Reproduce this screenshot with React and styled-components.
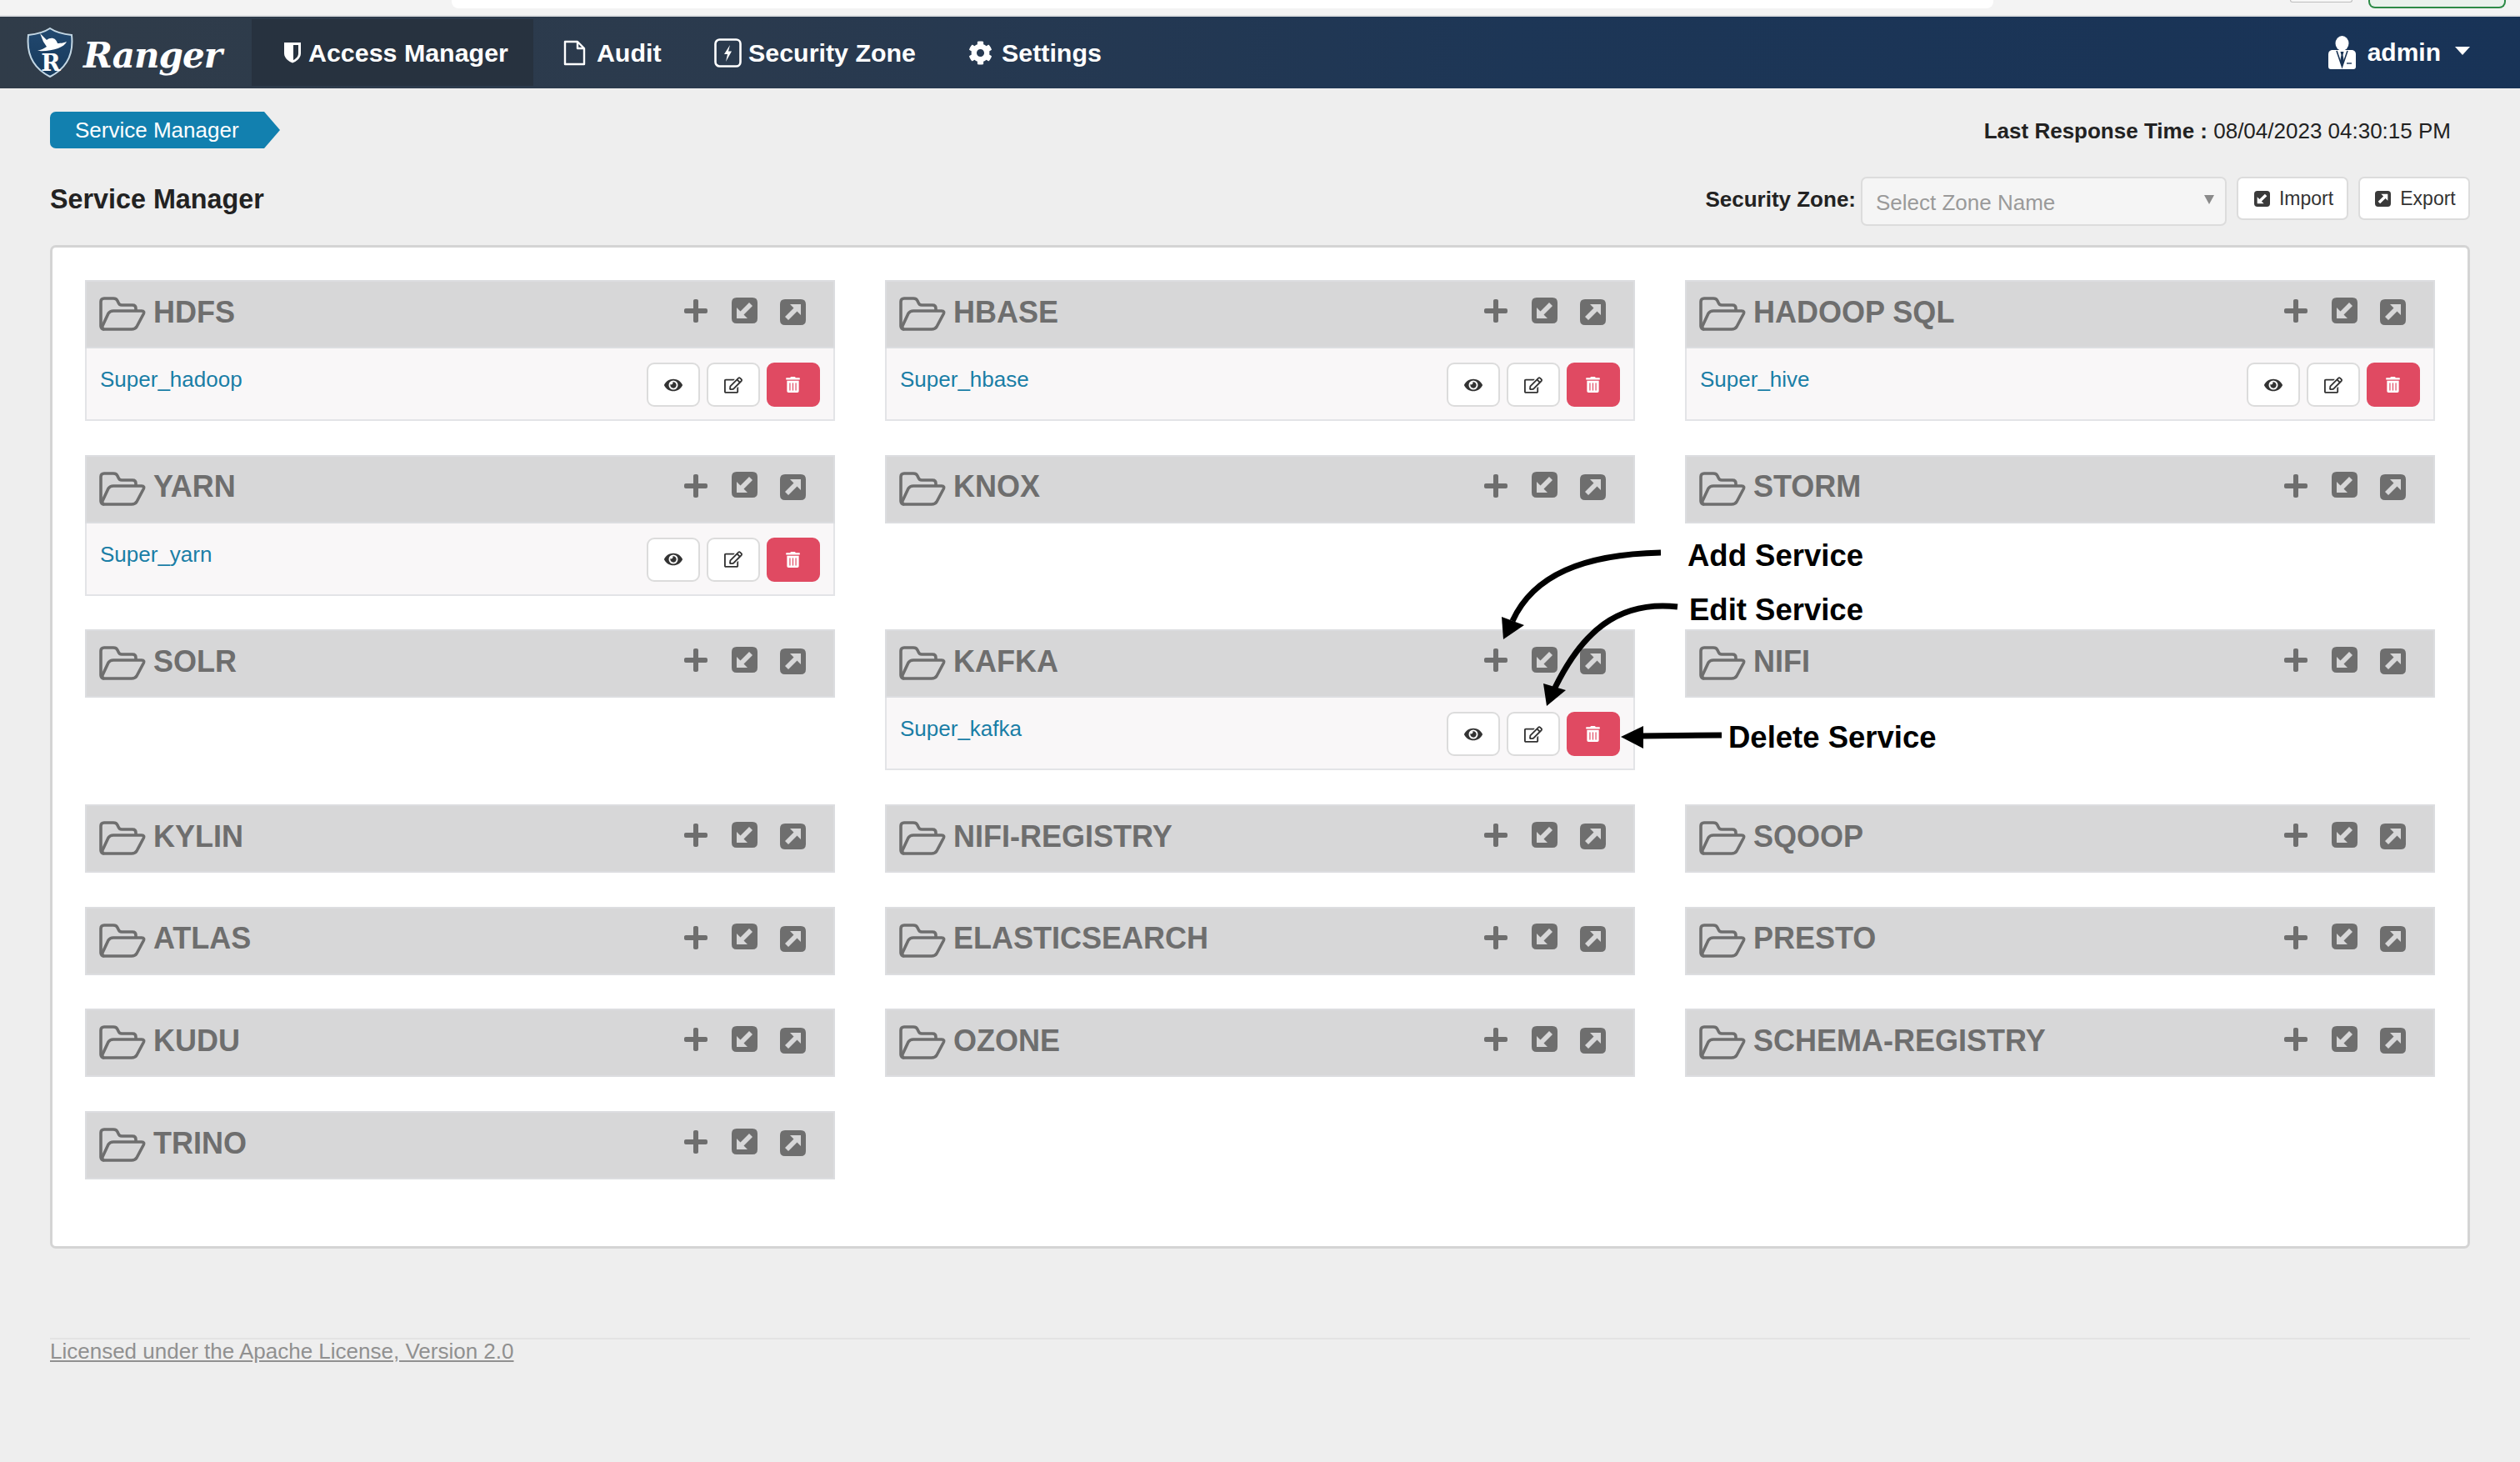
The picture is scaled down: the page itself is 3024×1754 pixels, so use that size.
import React from "react";
import styled, { createGlobalStyle } from "styled-components";
import { FaPlus, FaEye, FaRegEdit, FaTrashAlt, FaCog } from "react-icons/fa";

const Global = createGlobalStyle`
  html, body { margin: 0; padding: 0; background: #eeeeee; }
  body { font-family: "Liberation Sans", Arial, sans-serif; color: #222; }
  * { box-sizing: border-box; }
`;

const Page = styled.div`
  position: relative;
  width: 3024px;
  height: 1754px;
  overflow: hidden;
  background: #eeeeee;
`;

const BrowserStrip = styled.div`
  height: 20px;
  background: #f3f3f3;
  border-bottom: 2px solid #dfe1e3;
  padding-left: 542px;
  display: flex;
  align-items: flex-start;
`;
const AddressBar = styled.div`
  width: 1850px;
  height: 10px;
  background: #ffffff;
  border-radius: 0 0 8px 8px;
`;
const StripButton = styled.div`
  width: 75px;
  height: 3px;
  margin-left: 356px;
  background: #f7f7f7;
  border: 1px solid #bdbdbd;
  border-top: 0;
  border-radius: 0 0 6px 6px;
`;
const StripPrimary = styled.div`
  width: 165px;
  height: 10px;
  margin-left: 19px;
  background: #eaf2ec;
  border: 2px solid #2e8b47;
  border-top: 0;
  border-radius: 0 0 8px 8px;
`;

const Navbar = styled.header`
  height: 86px;
  display: flex;
  align-items: center;
  background: linear-gradient(90deg, #303c49 0%, #2a3a4e 30%, #1d3656 60%, #183357 100%);
  color: #fff;
`;
const Brand = styled.div`
  width: 302px;
  height: 100%;
  display: flex;
  align-items: center;
  padding-left: 31px;
  gap: 11px;
`;
const BrandName = styled.span`
  font-family: "DejaVu Serif", "Liberation Serif", serif;
  font-weight: 700;
  font-style: italic;
  font-size: 42px;
  letter-spacing: -1px;
  color: #fff;
  padding-top: 6px;
`;
const NavItem = styled.a`
  height: 80px;
  display: flex;
  align-items: center;
  gap: ${(p) => p.$gap}px;
  padding: ${(p) => p.$pad};
  background: ${(p) => (p.$active ? "#27323f" : "transparent")};
  font-size: 30.4px;
  font-weight: 700;
  color: #fff;
  line-height: 1;
  svg { flex: none; }
`;
const UserMenu = styled.div`
  margin-left: auto;
  display: flex;
  align-items: center;
  padding-right: 60px;
  font-size: 30px;
  font-weight: 700;
  gap: 14px;
`;
const Caret = styled.i`
  width: 0;
  height: 0;
  margin-left: 3px;
  margin-top: -4px;
  border-left: 9px solid transparent;
  border-right: 9px solid transparent;
  border-top: 10px solid #fff;
`;

const Content = styled.main`
  padding: 28px 60px 0 60px;
`;
const TopRow = styled.div`
  height: 44px;
  display: flex;
  align-items: center;
  justify-content: space-between;
`;
const Crumb = styled.div`
  position: relative;
  width: 257px;
  height: 44px;
  line-height: 44px;
  padding-left: 30px;
  background: #1280af;
  color: #fff;
  font-size: 26px;
  border-radius: 7px 0 0 7px;
  &::after {
    content: "";
    position: absolute;
    left: 100%;
    top: 0;
    border-left: 19px solid #1280af;
    border-top: 22px solid transparent;
    border-bottom: 22px solid transparent;
  }
`;
const ResponseTime = styled.div`
  font-size: 26px;
  padding: 2px 23px 0 0;
  color: #222;
  b { font-weight: 700; }
`;
const HeadRow = styled.div`
  height: 59px;
  margin-top: 34px;
  display: flex;
  align-items: flex-start;
`;
const Heading = styled.h1`
  margin: 8px 0 0;
  font-size: 32.3px;
  line-height: 38px;
  font-weight: 700;
  color: #222;
`;
const ZoneLabel = styled.label`
  margin-left: auto;
  margin-top: 12px;
  font-size: 26px;
  line-height: 30px;
  font-weight: 700;
  color: #222;
`;
const ZoneSelect = styled.div`
  width: 439px;
  height: 59px;
  margin-left: 6px;
  display: flex;
  align-items: center;
  justify-content: space-between;
  padding: 4px 13px 0 16px;
  background: #f5f5f5;
  border: 2px solid #dcdcdc;
  border-radius: 7px;
  font-size: 26px;
  color: #9a9a9a;
`;
const SelectArrow = styled.i`
  width: 0;
  height: 0;
  margin-top: -8px;
  border-left: 6.5px solid transparent;
  border-right: 6.5px solid transparent;
  border-top: 11px solid #8a8a8a;
`;
const ToolButton = styled.button`
  width: 134px;
  height: 52px;
  margin-left: 12px;
  display: flex;
  align-items: center;
  justify-content: center;
  gap: 11px;
  padding: 1px 0 0 3px;
  background: #fff;
  border: 2px solid #dcdcdc;
  border-radius: 7px;
  font-family: inherit;
  font-size: 23px;
  color: #333;
`;

const Panel = styled.section`
  margin-top: 23px;
  height: 1204px;
  padding: 39px 38px 0 39px;
  background: #fff;
  border: 3px solid #d4d4d4;
  border-radius: 7px;
  display: grid;
  grid-template-columns: repeat(3, 900px);
  column-gap: 60px;
  row-gap: 40.7px;
  grid-auto-rows: max-content;
  align-items: start;
`;
const Card = styled.article`
  display: flex;
  flex-direction: column;
`;
const CardHeader = styled.div`
  height: 82px;
  display: flex;
  align-items: center;
  padding: 0 33px 0 15px;
  background: #d7d7d8;
  border: 2px solid #dcdde0;
  color: #6e6e6e;
`;
const CardTitle = styled.h2`
  margin: 0 0 5px 9px;
  font-size: 36px;
  line-height: 1;
  font-weight: 700;
  color: #6e6e6e;
`;
const CardActions = styled.div`
  margin-left: auto;
  display: flex;
  align-items: center;
  gap: 27px;
  padding-bottom: 8px;
  svg { display: block; }
  svg:nth-child(2) { margin-bottom: 2px; }
  svg:nth-child(3) { margin-top: 3px; }
`;
const CardBody = styled.div`
  height: 87px;
  display: flex;
  align-items: flex-start;
  justify-content: space-between;
  padding: 17px 16px 0 16px;
  background: #f9f7f8;
  border: 2px solid #e3e4e7;
  border-top: 0;
`;
const ServiceLink = styled.a`
  font-size: 26px;
  line-height: 32px;
  margin-top: 4px;
  color: #1a7ea6;
`;
const ButtonRow = styled.div`
  display: flex;
  gap: 7.5px;
`;
const RowButton = styled.button`
  width: 64.5px;
  height: 53px;
  display: flex;
  align-items: center;
  justify-content: center;
  padding: 0;
  background: ${(p) => (p.$danger ? "#e04a62" : "#fff")};
  border: 2px solid ${(p) => (p.$danger ? "#e04a62" : "#dcdcdc")};
  border-radius: 9px;
  color: ${(p) => (p.$danger ? "#fff" : "#333")};
`;

const Footer = styled.footer`
  margin-top: 107px;
  border-top: 2px solid #e3e3e3;
  font-size: 26px;
  line-height: 28px;
  a { color: #909090; text-decoration: underline; }
`;

const Callout = styled.span`
  position: absolute;
  left: ${(p) => p.$x}px;
  top: ${(p) => p.$y}px;
  font-size: 36.5px;
  line-height: 42px;
  font-weight: 700;
  color: #000;
  white-space: nowrap;
`;
const ArrowLayer = styled.svg`
  position: absolute;
  left: 0;
  top: 0;
  pointer-events: none;
`;

const Logo = () => (
  <svg width="58" height="62" viewBox="0 0 58 62">
    <defs>
      <linearGradient id="shieldFill" x1="0" y1="0" x2="0" y2="1">
        <stop offset="0" stopColor="#21486f" />
        <stop offset="1" stopColor="#173a5c" />
      </linearGradient>
    </defs>
    <path
      d="M29 2 C35 6 45 9 55 10 C57 28 53 48 29 60 C5 48 1 28 3 10 C13 9 23 6 29 2 Z"
      fill="url(#shieldFill)"
      stroke="#c3d7e4"
      strokeWidth="2"
    />
    <path d="M17 8 L25 16 C30 12 36 13 38 20 C42 20 47 19 49 18 C46 25 32 30 14 29 C18 28 22 26 25 24 L21 18 Z" fill="#fff" />
    <text x="30" y="53" textAnchor="middle" fontFamily="'DejaVu Serif', serif" fontWeight="700" fontSize="28" fill="#fff">R</text>
  </svg>
);

const ShieldIcon = () => (
  <svg width="22" height="26" viewBox="0 0 22 26">
    <path d="M1 1 H21 V14 C21 20 15 24 11 25.5 C7 24 1 20 1 14 Z" fill="#fff" />
    <path d="M12 4 H18 V14 C18 18 15 20.5 12 22 Z" fill="#27323f" />
  </svg>
);
const FileIcon = () => (
  <svg width="27" height="31" viewBox="0 0 27 31" fill="none" stroke="#fff" strokeWidth="2.4">
    <path d="M2 2 H17 L25 10 V29 H2 Z M17 2 V10 H25" strokeLinejoin="round" />
  </svg>
);
const ZoneIcon = () => (
  <svg width="33" height="35" viewBox="0 0 33 35">
    <rect x="1.5" y="1.5" width="30" height="32" rx="5" fill="none" stroke="#fff" strokeWidth="2.6" />
    <path d="M19 8 L12 19 H16 L14 28 L21 15.5 H17 Z" fill="#fff" />
  </svg>
);
const AdminIcon = () => (
  <svg width="33" height="40" viewBox="0 0 33 40">
    <ellipse cx="16.5" cy="9" rx="8" ry="9" fill="#fff" />
    <path d="M4 17 H29 Q33 18 33 22 V37 Q33 40 30 40 H3 Q0 40 0 37 V22 Q0 18 4 17 Z" fill="#fff" />
    <path d="M10 18 L16.5 37 L23 18" fill="none" stroke="#1b3556" strokeWidth="1.6" />
    <path d="M14.5 19 H18.5 L17.5 23 L19 31 L16.5 35 L14 31 L15.5 23 Z" fill="#1b3556" />
    <path d="M22 33 H28" stroke="#1b3556" strokeWidth="1.4" />
  </svg>
);
const FolderIcon = () => (
  <svg width="56" height="42" viewBox="0 0 56 42" fill="none" stroke="#6e6e6e" strokeWidth="3.6" strokeLinejoin="round">
    <path d="M6 39 Q2 39 2 35 V6 Q2 2 6 2 H17 Q21 2 22 5 L23 7 Q24 10 27 10 H40 Q44 10 44 14 V17" />
    <path d="M6 39 H39 Q43 39 45 36 L53 21 Q55 17 51 17 H17 Q13 17 11 20 L4 35 Q3 38 6 39 Z" />
  </svg>
);
const InIcon = ({ size = 31, color = "#6e6e6e" }) => (
  <svg width={size} height={size} viewBox="0 0 31 31">
    <path
      fillRule="evenodd"
      fill={color}
      d="M6 0 H25 Q31 0 31 6 V25 Q31 31 25 31 H6 Q0 31 0 25 V6 Q0 0 6 0 Z M6 12 V25 H19 L14.5 20.5 L25 10 L21 6 L10.5 16.5 Z"
    />
  </svg>
);
const OutIcon = ({ size = 31, color = "#6e6e6e" }) => (
  <svg width={size} height={size} viewBox="0 0 31 31">
    <path
      fillRule="evenodd"
      fill={color}
      d="M6 0 H25 Q31 0 31 6 V25 Q31 31 25 31 H6 Q0 31 0 25 V6 Q0 0 6 0 Z M25 19 V6 H12 L16.5 10.5 L6 21 L10 25 L20.5 14.5 Z"
    />
  </svg>
);

const services = [
  ["HDFS", "Super_hadoop"],
  ["HBASE", "Super_hbase"],
  ["HADOOP SQL", "Super_hive"],
  ["YARN", "Super_yarn"],
  ["KNOX"],
  ["STORM"],
  ["SOLR"],
  ["KAFKA", "Super_kafka"],
  ["NIFI"],
  ["KYLIN"],
  ["NIFI-REGISTRY"],
  ["SQOOP"],
  ["ATLAS"],
  ["ELASTICSEARCH"],
  ["PRESTO"],
  ["KUDU"],
  ["OZONE"],
  ["SCHEMA-REGISTRY"],
  ["TRINO"],
];

const ServiceCard = ({ name, service }) => (
  <Card>
    <CardHeader>
      <FolderIcon />
      <CardTitle>{name}</CardTitle>
      <CardActions>
        <FaPlus size={32} />
        <InIcon />
        <OutIcon />
      </CardActions>
    </CardHeader>
    {service && (
      <CardBody>
        <ServiceLink>{service}</ServiceLink>
        <ButtonRow>
          <RowButton><FaEye size={22} /></RowButton>
          <RowButton><FaRegEdit size={22} /></RowButton>
          <RowButton $danger><FaTrashAlt size={19} /></RowButton>
        </ButtonRow>
      </CardBody>
    )}
  </Card>
);

export default function App() {
  return (
    <Page>
      <Global />
      <BrowserStrip>
        <AddressBar />
        <StripButton />
        <StripPrimary />
      </BrowserStrip>
      <Navbar>
        <Brand>
          <Logo />
          <BrandName>Ranger</BrandName>
        </Brand>
        <NavItem $active $gap={8} $pad="0 30px 0 38px"><ShieldIcon />Access Manager</NavItem>
        <NavItem $gap={13} $pad="0 31px 0 36px"><FileIcon />Audit</NavItem>
        <NavItem $gap={8} $pad="0 30.5px 0 32.5px"><ZoneIcon />Security Zone</NavItem>
        <NavItem $gap={11} $pad="0 32.5px"><FaCog size={29} />Settings</NavItem>
        <UserMenu>
          <AdminIcon />
          admin
          <Caret />
        </UserMenu>
      </Navbar>
      <Content>
        <TopRow>
          <Crumb>Service Manager</Crumb>
          <ResponseTime><b>Last Response Time :</b> 08/04/2023 04:30:15 PM</ResponseTime>
        </TopRow>
        <HeadRow>
          <Heading>Service Manager</Heading>
          <ZoneLabel>Security Zone:</ZoneLabel>
          <ZoneSelect>Select Zone Name<SelectArrow /></ZoneSelect>
          <ToolButton><InIcon size={19} color="#3a3a3a" />Import</ToolButton>
          <ToolButton><OutIcon size={19} color="#3a3a3a" />Export</ToolButton>
        </HeadRow>
        <Panel>
          {services.map(([name, service]) => (
            <ServiceCard key={name} name={name} service={service} />
          ))}
        </Panel>
        <Footer><a>Licensed under the Apache License, Version 2.0</a></Footer>
      </Content>
      <ArrowLayer width="3024" height="1754" viewBox="0 0 3024 1754">
        <path d="M1993 663 C1900 665 1840 690 1815 745" fill="none" stroke="#000" strokeWidth="7" />
        <path d="M1804 767 L1802 740 L1829 750 Z" fill="#000" />
        <path d="M2013 728 C1940 720 1898 760 1866 825" fill="none" stroke="#000" strokeWidth="7" />
        <path d="M1856 847 L1852 820 L1879 828 Z" fill="#000" />
        <path d="M2066 882 L1968 883" fill="none" stroke="#000" strokeWidth="7" />
        <path d="M1945 884 L1972 871 L1972 898 Z" fill="#000" />
      </ArrowLayer>
      <Callout $x={2025} $y={646}>Add Service</Callout>
      <Callout $x={2027} $y={711}>Edit Service</Callout>
      <Callout $x={2074} $y={864}>Delete Service</Callout>
    </Page>
  );
}
